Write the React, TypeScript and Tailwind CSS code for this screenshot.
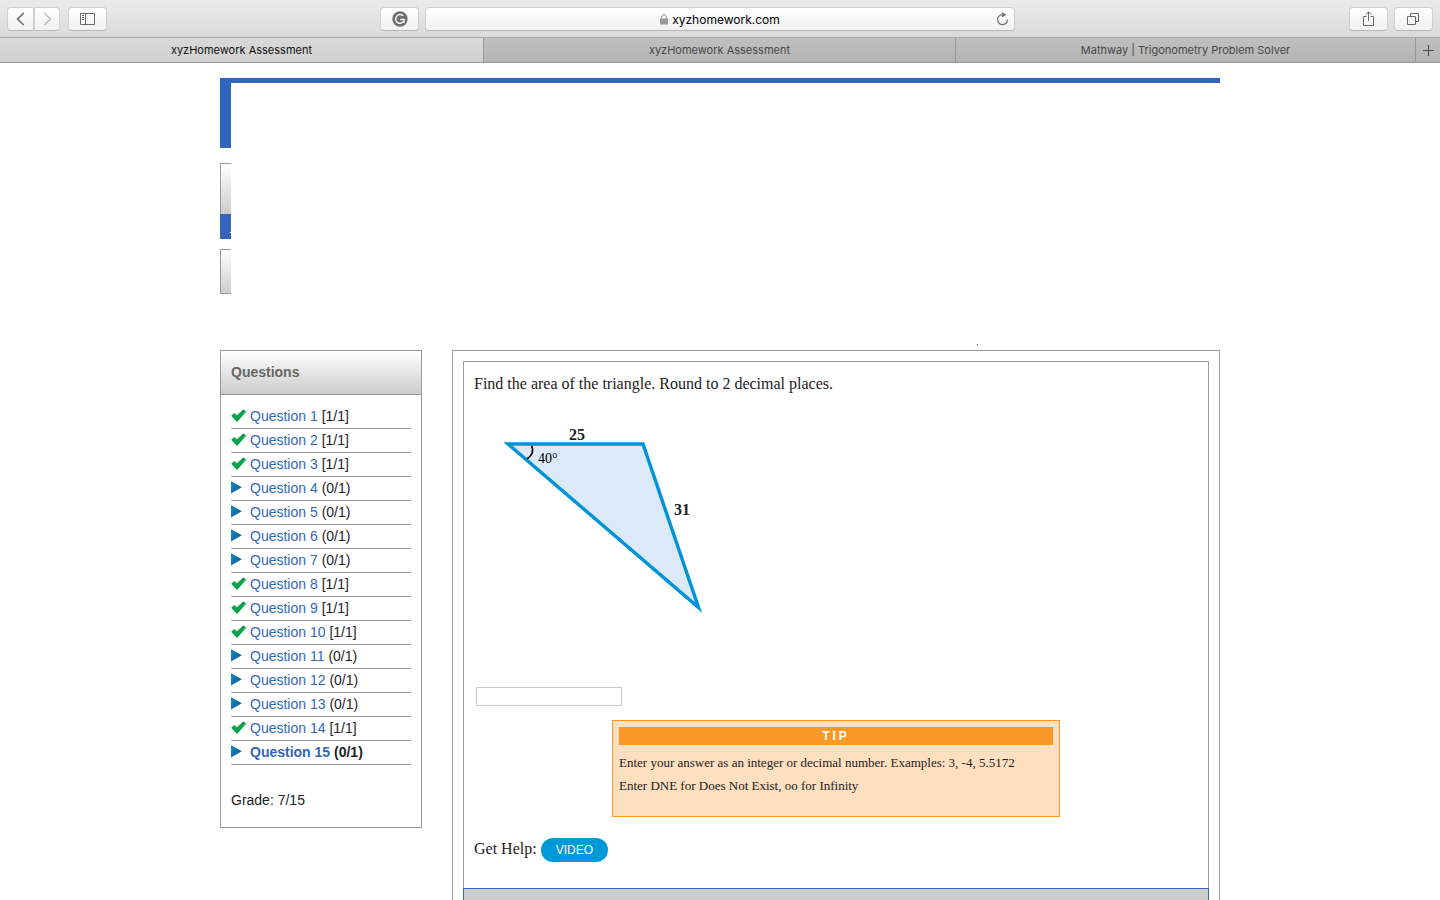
import React from 'react';

type Question = {
    id: number;
    correct: boolean;
};

const correctIds = [1, 2, 3, 8, 9, 10, 14];
const currentId = 15;

const questions: Question[] = Array.from({ length: 15 }, (_, i) => ({
    id: i + 1,
    correct: correctIds.includes(i + 1),
}));

const ToolbarButton: React.FC<{
    label: string;
    className: string;
    children: React.ReactNode;
}> = ({ label, className, children }) => {
    return (
        <button
            type="button"
            aria-label={label}
            className={`flex h-6 items-center justify-center border border-[#d0d0d0] border-b-[#b8b8b8] bg-linear-to-b from-white to-[#f1f1f1] ${className}`}
        >
            {children}
        </button>
    );
};

const CheckIcon = () => (
    <svg width="15" height="13" viewBox="0 0 15 13" aria-hidden="true">
        <path d="M0.2 6.7L3.2 3.9L6 6.2L12.6 0.3L15 2.7L6.6 12.6H5.4Z" fill="#0aa04a" />
        <path d="M3 6L6 9L13 2" fill="none" stroke="#22b45e" strokeWidth="0.8" strokeDasharray="1 1" />
    </svg>
);

const ArrowIcon = () => (
    <svg width="11" height="13" viewBox="0 0 11 13" aria-hidden="true">
        <defs>
            <linearGradient id="arrow-fill" x1="0" y1="0" x2="1" y2="1">
                <stop offset="0" stopColor="#1b8fd0" />
                <stop offset="1" stopColor="#04538c" />
            </linearGradient>
        </defs>
        <path d="M0 0L10.8 6.2L0 12.4Z" fill="url(#arrow-fill)" />
    </svg>
);

const BrowserToolbar = () => {
    return (
        <div className="grid grid-cols-[1fr_590px_1fr] border-b border-[#a8a8a8] bg-linear-to-b from-[#ebebeb] to-[#dadada] px-[7px] pt-[7px] pb-[6px]">
            <div className="flex items-center">
                <ToolbarButton label="Back" className="w-[27px] rounded-l-[4px] rounded-r-xs">
                    <svg width="9" height="14" viewBox="0 0 9 14" fill="none" stroke="#6b6b6b" strokeWidth="1.6">
                        <path d="M7.7 1L1.6 7L7.7 13" />
                    </svg>
                </ToolbarButton>
                <ToolbarButton label="Forward" className="w-[26px] rounded-r-[4px] rounded-l-xs">
                    <svg width="9" height="14" viewBox="0 0 9 14" fill="none" stroke="#bdbdbd" strokeWidth="1.6">
                        <path d="M1.3 1L7.4 7L1.3 13" />
                    </svg>
                </ToolbarButton>
                <ToolbarButton label="Show sidebar" className="ml-2 w-[39px] rounded-[4px]">
                    <svg width="15" height="12" viewBox="0 0 15 12" fill="none" stroke="#6b6b6b">
                        <path d="M0.5 0.5H14.5V11.5H0.5ZM5.5 0.5V11.5M2 2.5H4M2 4.5H4M2 6.5H4" />
                    </svg>
                </ToolbarButton>
                <ToolbarButton label="Grammarly" className="mr-[6px] ml-auto w-[39px] rounded-[4px]">
                    <svg width="16" height="16" viewBox="0 0 16 16" fill="none">
                        <circle cx="8" cy="8" r="7.7" fill="#6f6f6f" />
                        <path d="M11.2 4.8A4.4 4.4 0 1 0 11.6 10.6" stroke="#f8f8f8" strokeWidth="1.5" />
                        <path d="M8.2 8.6H12V11.8" stroke="#f8f8f8" strokeWidth="1.5" />
                    </svg>
                </ToolbarButton>
            </div>
            <div className="flex h-6 items-center rounded-[4px] border border-[#d0d0d0] border-b-[#b8b8b8] bg-linear-to-b from-white to-[#f1f1f1]">
                <div className="flex flex-1 items-center justify-center gap-1 pt-px pl-[18px] text-[12px] text-black">
                    <svg width="8" height="11" viewBox="0 0 8 11" fill="none" aria-hidden="true">
                        <path d="M1.7 5V3A2.3 2.3 0 0 1 6.3 3V5" stroke="#9a9a9a" />
                        <rect y="4.5" width="8" height="6" rx="0.6" fill="#9a9a9a" />
                    </svg>
                    <span>xyzhomework.com</span>
                </div>
                <button type="button" aria-label="Reload" className="mr-[5px]">
                    <svg width="13" height="14" viewBox="0 0 13 14" fill="none" stroke="#747474" strokeWidth="1.3">
                        <path d="M6.5 2.6A5 5 0 1 0 11.6 7.4" />
                        <path d="M5.9 0L10.4 2.8L5.9 5.6Z" fill="#747474" stroke="none" />
                    </svg>
                </button>
            </div>
            <div className="flex items-center justify-end gap-[6px]">
                <ToolbarButton label="Share" className="w-[39px] rounded-[4px]">
                    <svg width="11" height="16" viewBox="0 0 11 16" fill="none" stroke="#6b6b6b">
                        <path d="M3.5 5.5H0.5V14.5H10.5V5.5H7.5M5.5 10V1M2.7 3.6L5.5 0.8L8.3 3.6" />
                    </svg>
                </ToolbarButton>
                <ToolbarButton label="Show all tabs" className="w-[39px] rounded-[4px]">
                    <svg width="13" height="13" viewBox="0 0 13 13" fill="none" stroke="#6b6b6b">
                        <path d="M0.5 3.5H8.5V11.5H0.5ZM3.5 3.5V0.5H11.5V8.5H8.5" />
                    </svg>
                </ToolbarButton>
            </div>
        </div>
    );
};

const BrowserTabs = () => {
    return (
        <div className="grid h-[25px] grid-cols-[484fr_472fr_460fr_24px] border-b border-[#999] bg-linear-to-b from-[#c0c0c0] to-[#b4b4b4] text-[11px] text-[#484848]">
            <button type="button" className="border-r border-[#999] bg-linear-to-b from-[#d9d9d9] to-[#d1d1d1] text-[#111]">
                xyzHomework Assessment
            </button>
            <button type="button" className="border-r border-[#999]">xyzHomework Assessment</button>
            <button type="button" className="border-r border-[#999]">Mathway | Trigonometry Problem Solver</button>
            <button type="button" aria-label="New tab" className="flex items-center justify-center">
                <svg width="11" height="11" viewBox="0 0 11 11" stroke="#4c4c4c">
                    <path d="M0 5.5H11M5.5 0V11" />
                </svg>
            </button>
        </div>
    );
};

// What is left visible of the site banner and its navigation
const SiteBanner = () => {
    return (
        <div>
            <div className="h-[5px] bg-[#3165bb]"></div>
            <div className="h-[65px] w-[11px] bg-[#3165bb]"></div>
            <div className="mt-[15px] h-[51px] w-[11px] border-t border-l border-[#999] bg-linear-to-b from-white to-[#ccc]"></div>
            <div className="flex h-[25px] w-[11px] justify-end bg-[#3366bb] pt-[18px]">
                <span className="h-px w-px bg-white"></span>
            </div>
            <div className="mt-[10px] h-[45px] w-[11px] border-y border-l border-[#999] bg-linear-to-b from-white to-[#ccc]"></div>
            <div className="flex h-14 items-end pb-[5px] pl-[757px]">
                <span className="h-px w-px bg-[#444]"></span>
            </div>
        </div>
    );
};

const QuestionList = () => {
    return (
        <aside className="w-[202px] flex-shrink-0 border border-[#999] text-[14px] text-[#222]">
            <h2 className="border-b border-[#999] bg-linear-to-b from-white to-[#ccc] px-[10px] pt-[9px] pb-[10px] leading-6 font-bold text-[#666]">
                Questions
            </h2>
            <ul className="px-[10px] pt-[10px]">
                {questions.map(q => (
                    <li
                        key={q.id}
                        className={`flex h-6 items-center border-b border-[#999] ${q.id === currentId ? 'font-bold' : ''}`}
                    >
                        <span className="w-[19px] pb-[2px]">{q.correct ? <CheckIcon /> : <ArrowIcon />}</span>
                        <span>
                            <a href={`#question-${q.id}`} className="text-[#3366bb]">Question {q.id}</a>{' '}
                            {q.correct ? '[1/1]' : '(0/1)'}
                        </span>
                    </li>
                ))}
            </ul>
            <p className="px-[10px] pt-[23px] pb-[15px] leading-6">Grade: 7/15</p>
        </aside>
    );
};

const TriangleFigure = () => {
    return (
        <svg width="280" height="240" viewBox="474 396 280 240" role="img" aria-label="Triangle with sides 25 and 31 and an angle of 40 degrees">
            <path d="M508 444H643L698.6 607.6Z" fill="#dce9f9" stroke="#0093d8" strokeWidth="3.4" />
            <path d="M531.6 445.8Q535.2 453 527 459" fill="none" stroke="#000" strokeWidth="1.7" />
            <text x="569" y="440" fontSize="16" fontWeight="bold" fill="#222">25</text>
            <text x="674" y="515" fontSize="16" fontWeight="bold" fill="#222">31</text>
            <text x="538" y="463" fontSize="14" fill="#000">40°</text>
        </svg>
    );
};

const QuestionPanel = () => {
    return (
        <main className="flex-1 border border-[#999] p-[10px] font-['Liberation_Serif',serif] text-[#222]">
            <div className="border-x border-t border-[#999] px-[10px] pt-[10px] pb-[26px]">
                <p className="text-[16px] leading-6">
                    <label htmlFor="answer">Find the area of the triangle. Round to 2 decimal places.</label>
                </p>
                <TriangleFigure />
                <div className="mt-[51px] pl-[2px]">
                    <input id="answer" type="text" className="block h-[19px] w-[146px] border border-[#ccc] bg-white px-1 text-[13px]" />
                </div>
                <div className="mx-auto mt-[14px] w-[448px] max-w-full border border-[#fb9827] bg-[#fedfc0] px-[6px] pt-[6px] pb-[19px] text-[13px]">
                    <h3 className="mb-[6px] bg-[#fb9827] text-center font-['Liberation_Sans',sans-serif] text-[12px] leading-[18px] font-bold tracking-[3px] text-white">
                        TIP
                    </h3>
                    <p className="leading-[23px]">Enter your answer as an integer or decimal number. Examples: 3, -4, 5.5172</p>
                    <p className="leading-[23px]">Enter DNE for Does Not Exist, oo for Infinity</p>
                </div>
                <div className="mt-[21px] flex items-start gap-1 text-[16px]">
                    <span className="leading-[22px]">Get Help:</span>
                    <button
                        type="button"
                        className="h-6 rounded-full bg-[#0099d8] px-[15px] font-['Liberation_Sans',sans-serif] text-[12px] text-white"
                    >
                        VIDEO
                    </button>
                </div>
            </div>
            <div className="h-11 border border-[#3366bb] bg-[#ccc]"></div>
        </main>
    );
};

const App: React.FC = () => {
    return (
        <div className="flex h-screen flex-col overflow-hidden bg-white font-['Liberation_Sans',sans-serif]">
            <header className="flex-shrink-0 font-['Inter',sans-serif]">
                <BrowserToolbar />
                <BrowserTabs />
            </header>
            <div className="min-h-0 flex-1 overflow-hidden">
                <div className="mx-auto max-w-[1000px] pt-[15px]">
                    <SiteBanner />
                    <div className="flex items-start gap-[30px]">
                        <QuestionList />
                        <QuestionPanel />
                    </div>
                </div>
            </div>
        </div>
    );
};

export default App;
